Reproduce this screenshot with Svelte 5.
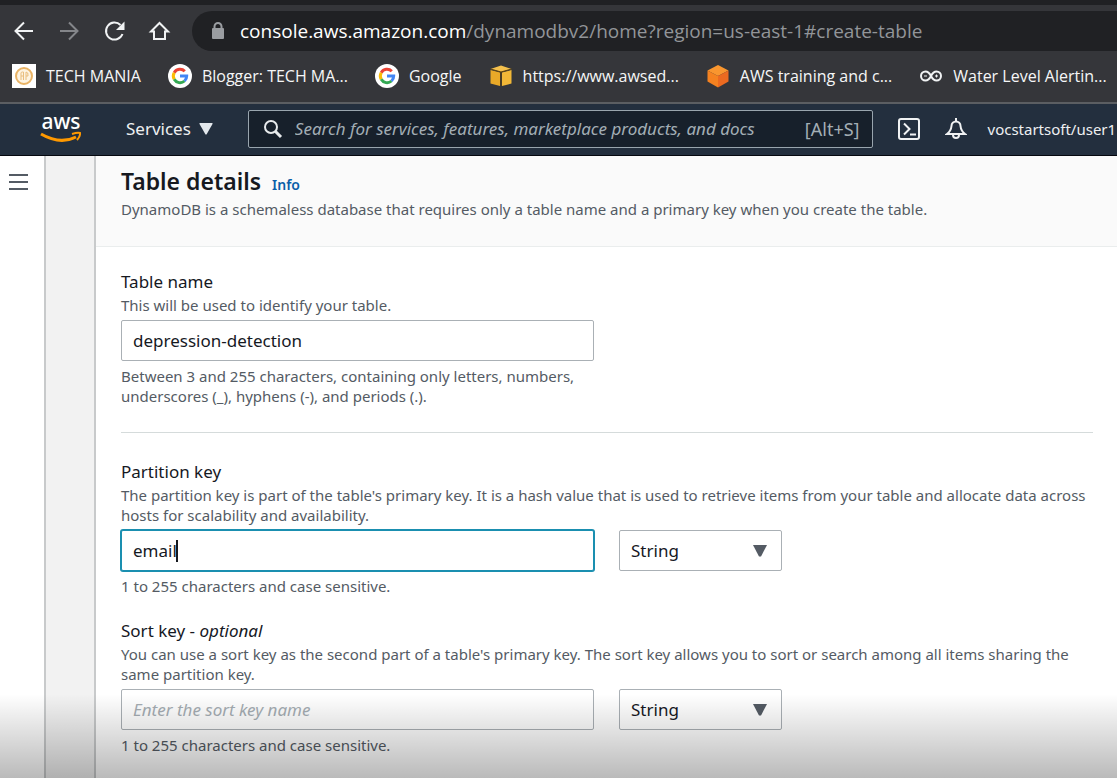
<script lang="ts">
  let tableName = "depression-detection";
  let partitionKey = "email";
  let sortKey = "";
  let partitionType = "String";
  let sortType = "String";

  const types = ["String", "Number", "Binary"];

  const bookmarks = [
    { icon: "coin", label: "TECH MANIA" },
    { icon: "google", label: "Blogger: TECH MA..." },
    { icon: "google", label: "Google" },
    { icon: "box", label: "https://www.awsed..." },
    { icon: "cube", label: "AWS training and c..." },
    { icon: "loop", label: "Water Level Alertin..." },
  ];
</script>

<div class="window">
  <div class="browser">
    <div class="toolbar">
      <button aria-label="Back">
        <svg width="24" height="24" viewBox="0 0 24 24"><path d="M21 12H4M12 3.500L3.500 12l8.500 8.500" /></svg>
      </button>
      <button class="off" aria-label="Forward">
        <svg width="24" height="24" viewBox="0 0 24 24"><path d="M3 12h17M12 3.500l8.500 8.500-8.500 8.500" /></svg>
      </button>
      <button aria-label="Reload">
        <svg width="24" height="24" viewBox="0 0 24 24">
          <path d="M20.500 15a8.500 8.500 0 1 1-2-9" />
          <path class="solid" d="M22.500 2.500v8.500H14z" />
        </svg>
      </button>
      <button aria-label="Home">
        <svg width="24" height="24" viewBox="0 0 24 24"><path d="M4 12.500h3V20h11v-7.500h3L12.500 4z" /></svg>
      </button>
      <div class="address">
        <svg width="18" height="20" viewBox="0 0 18 20">
          <rect x="3" y="7" width="12" height="11" rx="1" fill="#9a9da1" />
          <path d="M5.500 8V5.500a3.500 3.500 0 0 1 7 0V8" fill="none" stroke="#9a9da1" stroke-width="2" />
        </svg>
        <span><b>console.aws.amazon.com</b>/dynamodbv2/home?region=us-east-1#create-table</span>
      </div>
    </div>

    <nav class="bookmarks">
      {#each bookmarks as bookmark}
        <a href="#top">
          <svg width="24" height="24" viewBox="0 0 24 24">
            {#if bookmark.icon === "coin"}
              <rect width="24" height="24" fill="#fff" />
              <circle cx="12" cy="12" r="8" fill="#fdf3e1" stroke="#e9b365" stroke-width="2" />
              <path d="M9 16V9q0-1 1.500-1h1v8M9 12h2.500M14 16V8q2.500 0 2 4h-2" fill="none" stroke="#e9bd7d" />
            {:else if bookmark.icon === "google"}
              <circle cx="12" cy="12" r="12" fill="#fff" />
              <g fill="none" stroke-width="3">
                <path d="M6.200 8.700A6.700 6.700 0 0 1 16.800 7.300" stroke="#ea4335" />
                <path d="M6.200 15.300a6.700 6.700 0 0 1 0-6.600" stroke="#fbbc05" />
                <path d="M16.500 17a6.700 6.700 0 0 1-10.300-1.700" stroke="#34a853" />
                <path d="M12 12h6.700a6.700 6.700 0 0 1-2.200 5" stroke="#4285f4" />
              </g>
            {:else if bookmark.icon === "box"}
              <path d="M1.500 5L12 1.500 22.500 5 12 8z" fill="#f4c04d" />
              <path d="M1.500 6L11 8.500V22l-9.500-2.500z" fill="#e9a928" />
              <path d="M22.500 6L13 8.500V22l9.500-2.500z" fill="#f2b837" />
              <path d="M1.500 5L12 8l10.500-3M12 8v14" fill="none" stroke="#5d430f" />
            {:else if bookmark.icon === "cube"}
              <path d="M12 1l10.500 5.500L12 12 1.500 6.500z" fill="#f9962f" />
              <path d="M1.500 6.500L12 12v11.500l-10.500-6z" fill="#f58220" />
              <path d="M22.500 6.500L12 12v11.500l10.500-6z" fill="#ec6a20" />
            {:else}
              <path
                d="M12 12c-1.500-3-3-4.500-5.500-4.500a4.500 4.500 0 0 0 0 9c2.500 0 4-1.500 5.500-4.500s3-4.500 5.500-4.500a4.500 4.500 0 0 1 0 9c-2.500 0-4-1.500-5.500-4.500z"
                fill="none"
                stroke="#f1f3f4"
                stroke-width="2"
              />
              <path d="M5 12h3M16 12h3M17.500 10.500v3" stroke="#f1f3f4" />
            {/if}
          </svg>
          {bookmark.label}
        </a>
      {/each}
    </nav>
  </div>

  <header>
    <a class="logo" href="#top" aria-label="AWS home">
      <svg width="42" height="44" viewBox="0 0 42 44">
        <text x="21" y="22" text-anchor="middle">aws</text>
        <path d="M1 27q19 11 35 3" fill="none" stroke="#f90" stroke-width="3" />
        <path d="M32 27q6-2 8-1 .5 3-3 7" fill="none" stroke="#f90" stroke-width="2" />
      </svg>
    </a>
    <button class="services">
      Services
      <svg width="14" height="12" viewBox="0 0 14 12"><path d="M1 0h12q1 0 .5 1L7.500 11.500h-1L.5 1Q0 0 1 0z" fill="#e3e8ec" /></svg>
    </button>
    <label class="search">
      <svg width="20" height="20" viewBox="0 0 20 20">
        <circle cx="8" cy="8" r="6" fill="none" stroke="#e8ebed" stroke-width="2" />
        <path d="M12.500 12.500l5.500 5.500" stroke="#e8ebed" stroke-width="3" />
      </svg>
      <input type="search" aria-label="Search" placeholder="Search for services, features, marketplace products, and docs" />
      <kbd>[Alt+S]</kbd>
    </label>
    <button class="tool" aria-label="CloudShell">
      <svg width="22" height="22" viewBox="0 0 22 22" fill="none" stroke="#f0f2f3" stroke-width="2">
        <rect x="1" y="1" width="20" height="20" rx="2" />
        <path d="M6 5.500l5.500 5.500L6 16.500M12 16.500h6" />
      </svg>
    </button>
    <button class="tool" aria-label="Notifications">
      <svg width="22" height="22" viewBox="0 0 22 22" fill="none" stroke="#f0f2f3" stroke-width="2">
        <path d="M2 16q4-3 4.500-8a4.500 4.500 0 0 1 9 0q.5 5 4.500 8zM11 0v4" />
        <path d="M8 17a3 3 0 0 0 6 0" />
      </svg>
    </button>
    <a class="user" href="#top">vocstartsoft/user1</a>
  </header>

  <div class="page">
    <aside>
      <button aria-label="Open navigation">
        <svg width="20" height="18" viewBox="0 0 20 18"><path d="M1 2h19M1 9h19M1 16h19" stroke="#545b64" stroke-width="2" /></svg>
      </button>
    </aside>
    <main>
      <div class="heading">
        <h2>Table details <a href="#top">Info</a></h2>
        <p>DynamoDB is a schemaless database that requires only a table name and a primary key when you create the table.</p>
      </div>

      <div class="content">
        <section>
          <label for="table-name">Table name</label>
          <p>This will be used to identify your table.</p>
          <div class="fields">
            <input id="table-name" type="text" bind:value={tableName} />
          </div>
          <p class="hint">Between 3 and 255 characters, containing only letters, numbers, underscores (_), hyphens (-), and periods (.).</p>
        </section>

        <hr />

        <section>
          <label for="partition-key">Partition key</label>
          <p>
            The partition key is part of the table's primary key. It is a hash value that is used to retrieve items from your table and
            allocate data across hosts for scalability and availability.
          </p>
          <div class="fields">
            <div class="active">
              <input id="partition-key" type="text" bind:value={partitionKey} />
              <span class="caret"></span>
            </div>
            <div class="select">
              <select aria-label="Partition key type" bind:value={partitionType}>
                {#each types as type}<option>{type}</option>{/each}
              </select>
              <svg width="14" height="12" viewBox="0 0 14 12"><path d="M0 0h14L8 11.500H6z" /></svg>
            </div>
          </div>
          <p class="hint">1 to 255 characters and case sensitive.</p>
        </section>

        <section class="sort">
          <label for="sort-key">Sort key - <i>optional</i></label>
          <p>
            You can use a sort key as the second part of a table's primary key. The sort key allows you to sort or search among all items
            sharing the same partition key.
          </p>
          <div class="fields">
            <input id="sort-key" type="text" placeholder="Enter the sort key name" bind:value={sortKey} />
            <div class="select">
              <select aria-label="Sort key type" bind:value={sortType}>
                {#each types as type}<option>{type}</option>{/each}
              </select>
              <svg width="14" height="12" viewBox="0 0 14 12"><path d="M0 0h14L8 11.500H6z" /></svg>
            </div>
          </div>
          <p class="hint">1 to 255 characters and case sensitive.</p>
        </section>
      </div>
    </main>
  </div>
  <div class="shade"></div>
</div>

<style>
  :global(body) {
    overflow: hidden;
  }
  .window {
    display: flex;
    flex-direction: column;
    position: relative;
    min-height: 100vh;
    overflow: hidden;
    font-family: "Noto Sans", sans-serif;
    color: #16191f;
  }
  .window * {
    box-sizing: border-box;
  }
  button {
    display: flex;
    align-items: center;
    padding: 0;
    border: none;
    background: none;
    font: inherit;
    color: inherit;
    cursor: pointer;
  }
  a {
    color: inherit;
    text-decoration: none;
  }
  svg {
    flex: none;
  }

  .browser {
    border-top: 5px solid #202124;
    border-bottom: 2px solid #5b5e62;
    background-color: #35363a;
    color: #f5f6f7;
    font-family: "Open Sans", sans-serif;
    white-space: nowrap;
  }
  .toolbar {
    display: flex;
    align-items: center;
    gap: 21px;
    padding: 6px 0 0 12px;
  }
  .toolbar button path {
    fill: none;
    stroke: #f1f3f4;
    stroke-width: 2;
  }
  .toolbar button .solid {
    fill: #f1f3f4;
    stroke: none;
  }
  .toolbar .off path {
    stroke: #84868a;
  }
  .address {
    display: flex;
    flex: 1;
    align-items: center;
    gap: 13px;
    height: 40px;
    padding-left: 17px;
    border-radius: 20px 0 0 20px;
    background-color: #202124;
    color: #929599;
    font-size: 19px;
  }
  .address b {
    color: #fff;
    font-weight: 400;
  }
  .bookmarks {
    display: flex;
    align-items: center;
    gap: 27px;
    height: 51px;
    padding: 0 0 2px 12px;
    font-size: 16px;
  }
  .bookmarks a {
    display: flex;
    flex: none;
    align-items: center;
    gap: 10px;
  }

  header {
    display: flex;
    align-items: center;
    height: 52px;
    padding: 0 0 2px 40px;
    border-bottom: 1px solid #05080f;
    background-color: #232f3e;
    color: #eef0f1;
    font-size: 17px;
    white-space: nowrap;
  }
  .logo {
    display: flex;
  }
  .logo text {
    fill: #fff;
    font-size: 21px;
    font-weight: 500;
  }
  .services {
    gap: 8px;
    margin: 0 35px 0 44px;
  }
  .search {
    display: flex;
    flex: none;
    align-items: center;
    gap: 12px;
    width: 58%;
    height: 38px;
    padding: 0 12px 0 14px;
    border: 1px solid #99a5ae;
    border-radius: 2px;
    background-color: #17202b;
  }
  .search input {
    flex: 1;
    min-width: 0;
    padding: 0;
    border: none;
    outline: none;
    background: none;
    color: #fff;
    font: inherit;
  }
  .search input::placeholder {
    color: #a3aeb5;
    font-style: italic;
  }
  kbd {
    color: #a3aeb5;
    font: inherit;
    font-size: 18px;
  }
  .tool {
    margin-left: 25px;
  }
  .user {
    margin-left: 21px;
    font-size: 15px;
  }

  .page {
    display: flex;
    flex: 1;
  }
  aside {
    flex: none;
    width: 46px;
    padding: 17px 8px;
    border-right: 2px solid #c8cacb;
    background-color: #fff;
  }
  main {
    flex: 1;
    min-width: 0;
    margin-left: 48px;
    border-left: 2px solid #c8cacb;
    background-color: #fff;
    box-shadow: -48px 0 0 #f2f2f2;
  }
  .heading {
    padding: 11px 24px 27px 25px;
    border-bottom: 1px solid #eaeded;
    background-color: #fafafa;
  }
  h2 {
    margin: 0;
    font-size: 23px;
    font-weight: 600;
    line-height: 29px;
  }
  h2 a {
    margin-left: 5px;
    color: #0a5fa8;
    font-size: 14px;
  }
  p {
    margin: 0;
    color: #545b64;
    font-size: 15px;
    line-height: 20px;
  }
  .content {
    padding: 22px 24px 20px 25px;
  }
  label {
    display: block;
    font-size: 17px;
    line-height: 26px;
  }
  .fields {
    display: flex;
    gap: 25px;
    margin: 5px 0;
  }
  .fields input {
    width: 100%;
    height: 41px;
    padding: 0 11px;
    border: 1px solid #aab0b5;
    border-radius: 2px;
    outline: none;
    background-color: #fff;
    color: #16191f;
    font: inherit;
    font-size: 17px;
  }
  .fields > input,
  .active {
    flex: none;
    width: 49%;
    max-width: 473px;
  }
  .fields input::placeholder {
    color: #a5adb3;
    font-style: italic;
  }
  .active {
    position: relative;
  }
  .active input {
    border-color: #1a8fb0;
    box-shadow: 0 0 0 1px #1a8fb0;
  }
  .caret {
    position: absolute;
    top: 10px;
    left: 55px;
    width: 2px;
    height: 22px;
    background-color: #16191f;
  }
  .select {
    position: relative;
    width: 163px;
  }
  select {
    width: 100%;
    height: 41px;
    padding: 0 11px;
    border: 1px solid #aab0b5;
    border-radius: 2px;
    appearance: none;
    background-color: #fff;
    color: #16191f;
    font: inherit;
    font-size: 17px;
  }
  .select svg {
    position: absolute;
    top: 15px;
    right: 15px;
    fill: #545b64;
    pointer-events: none;
  }
  .hint {
    max-width: 480px;
  }
  hr {
    margin: 26px 0;
    border: none;
    border-top: 1px solid #d5dbdb;
  }
  .sort {
    margin-top: 22px;
  }
  .shade {
    position: absolute;
    right: 0;
    bottom: 0;
    left: 0;
    height: 84px;
    background: linear-gradient(transparent, rgba(0, 0, 0, 0.27));
    pointer-events: none;
  }
</style>
